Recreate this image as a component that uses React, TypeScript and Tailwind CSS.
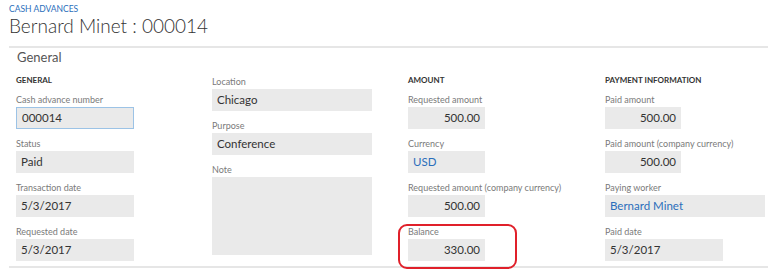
import React from 'react';

type Field = {
    label: string;
    value: string;
    w: string;          // box width
    right?: boolean;    // numbers sit on the right
    link?: boolean;     // blue lookup value
    focus?: boolean;
    h?: string;
};

function FormField({ f }: { f: Field }) {
    return (
        <div className="flex flex-col">
            <div className="h-[22px] pt-[9px] text-[9px] leading-[11px] text-[#7a7a7a] whitespace-nowrap">{f.label}</div>
            <div
                className={`${f.w} ${f.h ?? 'h-[22px]'} bg-[#eaeaea] flex items-center px-[5px] text-[11.5px] ${f.right ? 'justify-end' : ''} ${f.link ? 'text-[#2a6ebb]' : 'text-[#333333]'} ${f.focus ? 'border border-[#9cc3e6]' : ''}`}
            >
                {f.value}
            </div>
        </div>
    );
}

function Group({ title, fields, className }: { title?: string; fields: Field[]; className: string }) {
    return (
        <div className={`flex flex-col ${className}`}>
            {title && <div className="h-[18px] pt-[8px] text-[8px] leading-[10px] font-bold text-[#333333]">{title}</div>}
            {fields.map((f) => (
                <FormField key={f.label} f={f} />
            ))}
        </div>
    );
}

export default function App() {
    const general: Field[] = [
        { label: 'Cash advance number', value: '000014', w: 'w-[118px]', focus: true },
        { label: 'Status', value: 'Paid', w: 'w-[118px]' },
        { label: 'Transaction date', value: '5/3/2017', w: 'w-[118px]' },
        { label: 'Requested date', value: '5/3/2017', w: 'w-[118px]' },
    ];
    const middle: Field[] = [
        { label: 'Location', value: 'Chicago', w: 'w-[160px]' },
        { label: 'Purpose', value: 'Conference', w: 'w-[160px]' },
        { label: 'Note', value: '', w: 'w-[160px]', h: 'h-[78px]' },
    ];
    const amount: Field[] = [
        { label: 'Requested amount', value: '500.00', w: 'w-[77px]', right: true },
        { label: 'Currency', value: 'USD', w: 'w-[77px]', link: true },
        { label: 'Requested amount (company currency)', value: '500.00', w: 'w-[77px]', right: true },
        { label: 'Balance', value: '330.00', w: 'w-[77px]', right: true },
    ];
    const payment: Field[] = [
        { label: 'Paid amount', value: '500.00', w: 'w-[76px]', right: true },
        { label: 'Paid amount (company currency)', value: '500.00', w: 'w-[76px]', right: true },
        { label: 'Paying worker', value: 'Bernard Minet', w: 'w-[160px]', link: true },
        { label: 'Paid date', value: '5/3/2017', w: 'w-[118px]' },
    ];

    return (
        <div className="w-[768px] h-[273px] bg-white overflow-hidden" style={{ fontFamily: 'Lato, "Open Sans", sans-serif' }}>
            <div className="pl-[9px] pt-[4px] h-[46px]">
                <div className="text-[8.5px] leading-[10px] text-[#2a6ebb] uppercase">Cash advances</div>
                <div className="text-[19px] leading-[23px] font-light text-[#333333]">Bernard Minet : 000014</div>
            </div>

            <div className="ml-[9px] border-t-2 border-[#e6e6e6]">
                <div className="pl-[8px] pt-[1px] h-[19px] text-[13px] leading-[16px] text-[#555555]">General</div>

                <div className="flex pl-[7px] h-[199px]">
                    <Group title="GENERAL" fields={general} className="w-[196px]" />
                    <Group fields={middle} className="w-[196px]" />
                    <div className="relative w-[197px]">
                        <Group title="AMOUNT" fields={amount} className="" />
                        <div className="absolute left-[-10px] top-[157px] w-[119px] h-[45px] border-2 border-[#e0202a] rounded-[9px]" />
                    </div>
                    <Group title="PAYMENT INFORMATION" fields={payment} className="" />
                </div>

                <div className="border-t-2 border-[#e6e6e6]" />
            </div>
        </div>
    );
}
